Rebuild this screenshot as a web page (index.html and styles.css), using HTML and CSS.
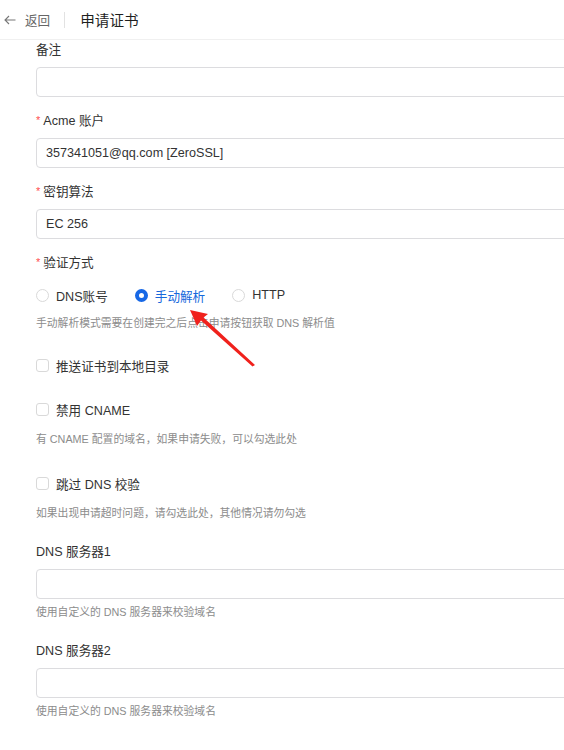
FILE: index.html
```html
<!DOCTYPE html>
<html>
<head>
<meta charset="utf-8">
<title>申请证书</title>
<link rel="stylesheet" href="styles.css">
</head>
<body>
<div class="page">
  <header class="topbar">
    <a class="back">
      <svg class="back-icon" width="12" height="10" viewBox="0 0 12 10"><path d="M11.5 5H1 M5 1 L1 5 L5 9" fill="none" stroke="#777" stroke-width="1.1"/></svg>
      <span class="back-text">返回</span>
    </a>
    <span class="divider"></span>
    <h1 class="title">申请证书</h1>
  </header>

  <form class="form">
    <div class="item">
      <div class="label">备注</div>
      <div class="input"></div>
    </div>
    <div class="item">
      <div class="label"><span class="req">*</span>Acme 账户</div>
      <div class="input">357341051@qq.com [ZeroSSL]</div>
    </div>
    <div class="item">
      <div class="label"><span class="req">*</span>密钥算法</div>
      <div class="input">EC 256</div>
    </div>
    <div class="item item-help item-radio">
      <div class="label"><span class="req">*</span>验证方式</div>
      <div class="radios">
        <span class="radio"><span class="dot"></span>DNS账号</span>
        <span class="radio radio-on"><span class="dot"></span>手动解析</span>
        <span class="radio"><span class="dot"></span>HTTP</span>
      </div>
      <div class="help">手动解析模式需要在创建完之后点击申请按钮获取 DNS 解析值</div>
    </div>
    <div class="item">
      <div class="check"><span class="box"></span>推送证书到本地目录</div>
    </div>
    <div class="item item-help">
      <div class="check"><span class="box"></span>禁用 CNAME</div>
      <div class="help help-check">有 CNAME 配置的域名，如果申请失败，可以勾选此处</div>
    </div>
    <div class="item item-help">
      <div class="check"><span class="box"></span>跳过 DNS 校验</div>
      <div class="help help-check">如果出现申请超时问题，请勾选此处，其他情况请勿勾选</div>
    </div>
    <div class="item item-help">
      <div class="label">DNS 服务器1</div>
      <div class="input"></div>
      <div class="help">使用自定义的 DNS 服务器来校验域名</div>
    </div>
    <div class="item item-help">
      <div class="label">DNS 服务器2</div>
      <div class="input"></div>
      <div class="help">使用自定义的 DNS 服务器来校验域名</div>
    </div>
  </form>

  <svg class="annot" width="564" height="750" viewBox="0 0 564 750">
    <path d="M190 310 L208 314 L203.5 317.5 L255 365 L252.5 366.5 L201 320.5 L197 326 Z" fill="#f0211c"/>
  </svg>
</div>
</body>
</html>
```

FILE: styles.css
```css
html, body {
  margin: 0;
  padding: 0;
  background: #fff;
  overflow: hidden;
}

body {
  font-family: "Liberation Sans", "Noto Sans CJK SC", sans-serif;
  color: #333;
  font-size: 12.6px;
}

.page {
  position: relative;
  width: 564px;
  height: 750px;
  overflow: hidden;
}

.topbar {
  height: 39px;
  border-bottom: 1px solid #f0f0f0;
  display: flex;
  align-items: center;
  padding-left: 4px;
}

.back {
  display: flex;
  align-items: center;
  color: #666;
  font-size: 12.6px;
}

.back-icon {
  margin-right: 9px;
}

.divider {
  width: 1px;
  height: 16px;
  background: #e2e2e2;
  margin: 0 15px 0 14px;
}

.title {
  margin: 0;
  font-size: 14.6px;
  font-weight: normal;
  color: #1f1f1f;
}

.form {
  width: 600px;
  padding-left: 36px;
  display: flex;
  flex-direction: column;
}

.item {
  margin-bottom: 14px;
}

.item-help {
  margin-bottom: 18px;
}

.item-radio {
  margin-bottom: 16px;
}

.label {
  height: 20px;
  line-height: 20px;
  margin-bottom: 7px;
  color: #333;
}

.req {
  display: inline-block;
  line-height: 10px;
  color: #ff4d4f;
  font-size: 11px;
  margin-right: 3px;
  position: relative;
  top: -1px;
}

.input {
  box-sizing: border-box;
  height: 30px;
  border: 1px solid #dcdcdf;
  border-radius: 4px;
  padding: 0 9px;
  line-height: 28px;
  color: #333;
  background: #fff;
}

.radios {
  display: flex;
  align-items: center;
  height: 30px;
}

.radio {
  display: flex;
  align-items: center;
  margin-right: 27px;
  color: #333;
}

.radio .dot {
  box-sizing: border-box;
  width: 13px;
  height: 13px;
  border: 1px solid #d9d9d9;
  border-radius: 50%;
  margin-right: 7px;
  background: #fff;
}

.radio-on {
  color: #1668dc;
}

.radio-on .dot {
  border: 4.5px solid #1768e6;
  background: #fff;
}

.help {
  margin-top: 2px;
  height: 22px;
  line-height: 22px;
  font-size: 10.8px;
  color: #8c8c8c;
}

.help-check {
  margin-top: 4px;
}

.check {
  display: flex;
  align-items: center;
  height: 30px;
  color: #333;
}

.check .box {
  box-sizing: border-box;
  width: 13px;
  height: 13px;
  border: 1px solid #d9d9d9;
  border-radius: 3px;
  margin-right: 7px;
  background: #fff;
}

.annot {
  position: absolute;
  left: 0;
  top: 0;
  pointer-events: none;
}
```
